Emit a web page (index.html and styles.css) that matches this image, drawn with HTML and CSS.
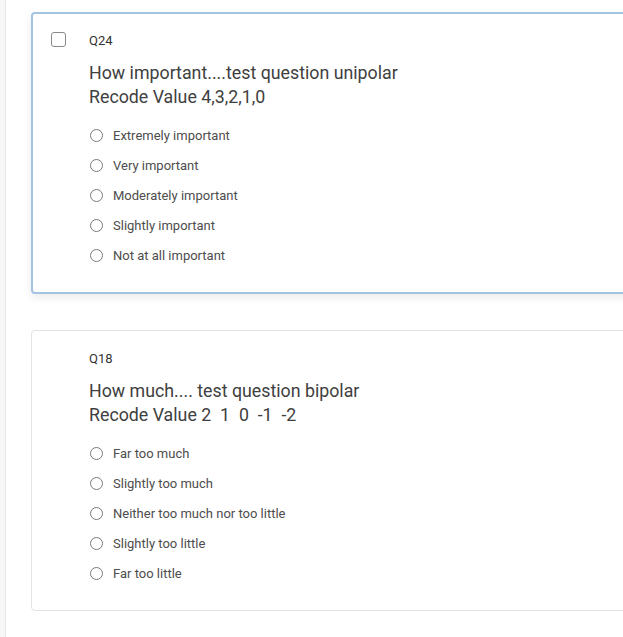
FILE: index.html
```html
<!DOCTYPE html>
<html>
<head>
<meta charset="utf-8">
<link rel="stylesheet" href="styles.css">
</head>
<body>
<div class="page">
  <div class="strip"></div>
  <div class="main">
    <div class="card selected">
      <div class="head">
        <span class="check"></span>
        <span class="qid">Q24</span>
      </div>
      <div class="body">
        <div class="qtext">How important....test question unipolar<br>Recode Value 4,3,2,1,0</div>
        <ul class="choices">
          <li><span class="radio"></span>Extremely important</li>
          <li><span class="radio"></span>Very important</li>
          <li><span class="radio"></span>Moderately important</li>
          <li><span class="radio"></span>Slightly important</li>
          <li><span class="radio"></span>Not at all important</li>
        </ul>
      </div>
    </div>
    <div class="card">
      <div class="head">
        <span class="qid">Q18</span>
      </div>
      <div class="body">
        <div class="qtext">How much.... test question bipolar<br>Recode Value 2&nbsp; 1&nbsp; 0&nbsp; -1&nbsp; -2</div>
        <ul class="choices">
          <li><span class="radio"></span>Far too much</li>
          <li><span class="radio"></span>Slightly too much</li>
          <li><span class="radio"></span>Neither too much nor too little</li>
          <li><span class="radio"></span>Slightly too little</li>
          <li><span class="radio"></span>Far too little</li>
        </ul>
      </div>
    </div>
  </div>
</div>
</body>
</html>
```
FILE: styles.css
```css
html, body {
  margin: 0;
  padding: 0;
  background: #fff;
  overflow: hidden;
}
body {
  font-family: Roboto, "Noto Sans", sans-serif;
  color: #333;
}
.page {
  display: flex;
  min-height: 637px;
}
.strip {
  width: 5px;
  background: #f7f7f7;
  border-right: 1px solid #e8e8e8;
  flex: none;
}
.main {
  padding: 12px 0 0 25px;
  flex: none;
}
.card {
  width: 700px;
  box-sizing: border-box;
  border: 1px solid #e3e3e3;
  border-radius: 4px;
  background: #fff;
  padding: 0 0 22px 0;
  margin-bottom: 36px;
}
.card.selected {
  border: 2px solid #a4c2e2;
  box-shadow: 0 4px 8px rgba(0,0,0,0.08);
  padding-bottom: 22px;
}
.head {
  display: flex;
  align-items: center;
  height: 28px;
  padding-top: 13px;
  padding-left: 57px;
  position: relative;
}
.selected .head {
  padding-top: 12px;
  padding-left: 56px;
}
.check {
  position: absolute;
  left: 18px;
  top: 18px;
  width: 13px;
  height: 13px;
  border: 1px solid #8a8a8a;
  border-radius: 3px;
}
.qid {
  font-size: 13px;
  color: #333;
}
.body {
  padding-left: 57px;
}
.selected .body {
  padding-left: 56px;
}
.qtext {
  font-size: 17.8px;
  line-height: 24px;
  color: #404040;
  margin-top: 7px;
}
.choices {
  list-style: none;
  margin: 11px 0 0 0;
  padding: 0;
}
.choices li {
  display: flex;
  align-items: center;
  height: 30px;
  font-size: 13px;
  color: #4d4d4d;
}
.radio {
  width: 11px;
  height: 11px;
  border: 1px solid #7a7a7a;
  border-radius: 50%;
  margin-left: 1px;
  margin-right: 10px;
  flex: none;
}
```
